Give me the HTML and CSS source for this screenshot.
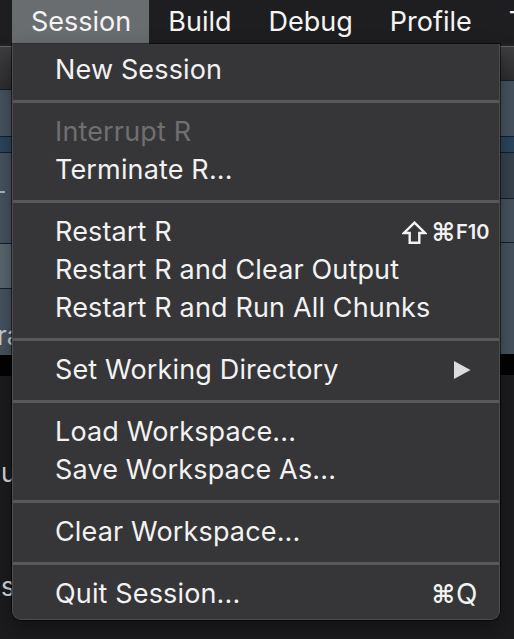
FILE: index.html
```html
<!DOCTYPE html>
<html lang="en">
<head>
<meta charset="utf-8">
<title>Session menu</title>
<link rel="stylesheet" href="styles.css">
</head>
<body>
<div class="screen">
  <header class="menubar">
    <span class="mb-item active">Session</span>
    <span class="mb-item">Build</span>
    <span class="mb-item">Debug</span>
    <span class="mb-item">Profile</span>
    <span class="mb-item">Tools</span>
  </header>

  <div class="app">
    <div class="col col-left">
      <div class="b b-dark2"></div>
      <div class="b b-hl"></div>
      <div class="b b-grad gl"></div>
      <div class="b b-line"></div>
      <div class="b b-slate h46"></div>
      <div class="b b-line"></div>
      <div class="b b-blue"></div>
      <div class="b b-line"></div>
      <div class="b b-slate h90"><span class="dash"></span></div>
      <div class="b b-line"></div>
      <div class="b b-light h44"></div>
      <div class="b b-line"></div>
      <div class="b b-slate h66"><span class="frag frag-ra">ra</span></div>
      <div class="b b-black"></div>
      <div class="b b-bottom">
        <span class="frag frag-u">u</span>
        <span class="frag frag-s">s</span>
      </div>
    </div>
    <div class="col col-right">
      <div class="b b-dark2"></div>
      <div class="b b-hl"></div>
      <div class="b b-grad gr"></div>
      <div class="b b-line"></div>
      <div class="b b-slate h55"></div>
      <div class="b b-line"></div>
      <div class="b b-blue"></div>
      <div class="b b-line"></div>
      <div class="b b-chev"><span class="chev">›</span></div>
      <div class="b b-line"></div>
      <div class="b b-slate h43"></div>
      <div class="b b-line"></div>
      <div class="b b-slate h111"></div>
      <div class="b b-black"></div>
      <div class="b b-bottom"></div>
    </div>
  </div>

  <nav class="menu">
    <div class="item"><span class="label">New Session</span></div>
    <div class="sep"></div>
    <div class="item disabled"><span class="label">Interrupt R</span></div>
    <div class="item"><span class="label">Terminate R...</span></div>
    <div class="sep"></div>
    <div class="item">
      <span class="label">Restart R</span>
      <span class="mods">
        <svg class="shift" width="25" height="23" viewBox="0 0 25 23"><path d="M12.5 1.6 L23 12 L17.3 12 L17.3 21.8 L7.7 21.8 L7.7 12 L2 12 Z" fill="none" stroke="#f2f2f2" stroke-width="2.4" stroke-linejoin="miter"/></svg><span class="cmd">⌘</span>
      </span>
      <span class="key fkey">F10</span>
    </div>
    <div class="item"><span class="label">Restart R and Clear Output</span></div>
    <div class="item"><span class="label">Restart R and Run All Chunks</span></div>
    <div class="sep"></div>
    <div class="item">
      <span class="label">Set Working Directory</span>
      <svg class="arrow" width="18" height="18" viewBox="0 0 18 18"><path d="M1 0 L17.5 9 L1 18 Z" fill="#dcdcdc"/></svg>
    </div>
    <div class="sep"></div>
    <div class="item"><span class="label">Load Workspace...</span></div>
    <div class="item"><span class="label">Save Workspace As...</span></div>
    <div class="sep"></div>
    <div class="item"><span class="label">Clear Workspace...</span></div>
    <div class="sep"></div>
    <div class="item">
      <span class="label">Quit Session...</span>
      <span class="mods"><span class="cmd">⌘</span></span>
      <span class="key">Q</span>
    </div>
  </nav>
</div>
</body>
</html>
```

FILE: styles.css
```css
* { box-sizing: border-box; }

html, body {
  margin: 0;
  padding: 0;
  background: #1d1d1f;
}

.screen {
  position: relative;
  width: 514px;
  height: 639px;
  overflow: hidden;
  font-family: Inter, "Noto Sans", "DejaVu Sans", sans-serif;
  background: #1d1d1f;
}

/* ---------- menu bar ---------- */
.menubar {
  display: flex;
  height: 44px;
  padding-left: 12px;
  background: #1e1e20;
  white-space: nowrap;
}

.mb-item {
  flex: none;
  height: 44px;
  line-height: 43px;
  padding: 0 18px 0 19px;
  font-size: 27px;
  color: #f4f4f4;
  letter-spacing: 0;
}

.mb-item.active {
  background: #6a6d70;
}

/* ---------- background app ---------- */
.app {
  display: flex;
  height: 595px;
}

.col {
  display: flex;
  flex-direction: column;
  width: 257px;
}

.b { flex: none; position: relative; }
.b-dark2 { height: 2px; background: #232325; }
.b-hl { height: 1px; background: #646466; }
.b-grad.gl { height: 42px; }
.b-grad.gr { height: 33px; }
.b-grad { background: linear-gradient(#3e3e40, #2e2e30); }
.b-line { height: 1px; background: #12202c; }
.b-slate { background: #46535f; }
.h46 { height: 46px; }
.h90 { height: 90px; }
.h44 { height: 44px; }
.h66 { height: 66px; }
.h55 { height: 55px; }
.h43 { height: 43px; }
.h111 { height: 111px; }
.b-light { background: #5b676f; }
.b-blue { height: 15px; background: #2c465c; }
.b-chev { height: 45px; background: #38434e; }
.b-black { height: 21px; background: #030303; }
.b-bottom { flex: 1; background: #1c1c1e; }

.dash {
  display: block;
  margin: 38px 0 0 0;
  width: 5px;
  height: 2px;
  background: #a8b8c8;
}

.chev {
  display: block;
  padding-left: 10px;
  font-size: 30px;
  line-height: 42px;
  font-weight: 700;
  color: #5d6872;
}

.frag {
  display: block;
  font-size: 26px;
  color: #d6dade;
  line-height: 30px;
}
.frag-ra { padding-top: 32px; margin-left: -3px; color: #c9d0d6; }
.frag-u { margin-top: 82px; padding-left: 1px; }
.frag-s { margin-top: 84px; padding-left: 1px; }

/* ---------- dropdown ---------- */
.menu {
  position: absolute;
  left: 12px;
  top: 44px;
  width: 488px;
  padding: 7px 0 6px;
  background: #363638;
  border: 1px solid #4c4c4e;
  border-top: 0;
  border-radius: 0 0 9px 9px;
  box-shadow: 0 0 0 1px rgba(0, 0, 0, 0.55), 0 8px 20px rgba(0, 0, 0, 0.4);
}

.item {
  display: flex;
  align-items: center;
  height: 38px;
  padding: 0 8px 0 42px;
  font-size: 27px;
  letter-spacing: 0.15px;
  color: #f2f2f2;
  white-space: nowrap;
}

.item.disabled { color: #6f6f72; }

.label { flex: 1; line-height: 36px; }

.mods {
  display: flex;
  align-items: center;
  gap: 5px;
  margin-right: 1px;
}

.shift { display: block; }

.cmd {
  font-family: "DejaVu Sans", sans-serif;
  font-size: 25px;
  line-height: 1;
  font-weight: 700;
  letter-spacing: 0;
}

.key {
  width: 35px;
  font-size: 28px;
  letter-spacing: 0;
}

.fkey {
  font-size: 20px;
  font-weight: 600;
}

.arrow {
  display: block;
  margin-right: 20px;
}

.sep {
  height: 3px;
  margin: 11px 0 10px;
  background: #59595b;
}
```
